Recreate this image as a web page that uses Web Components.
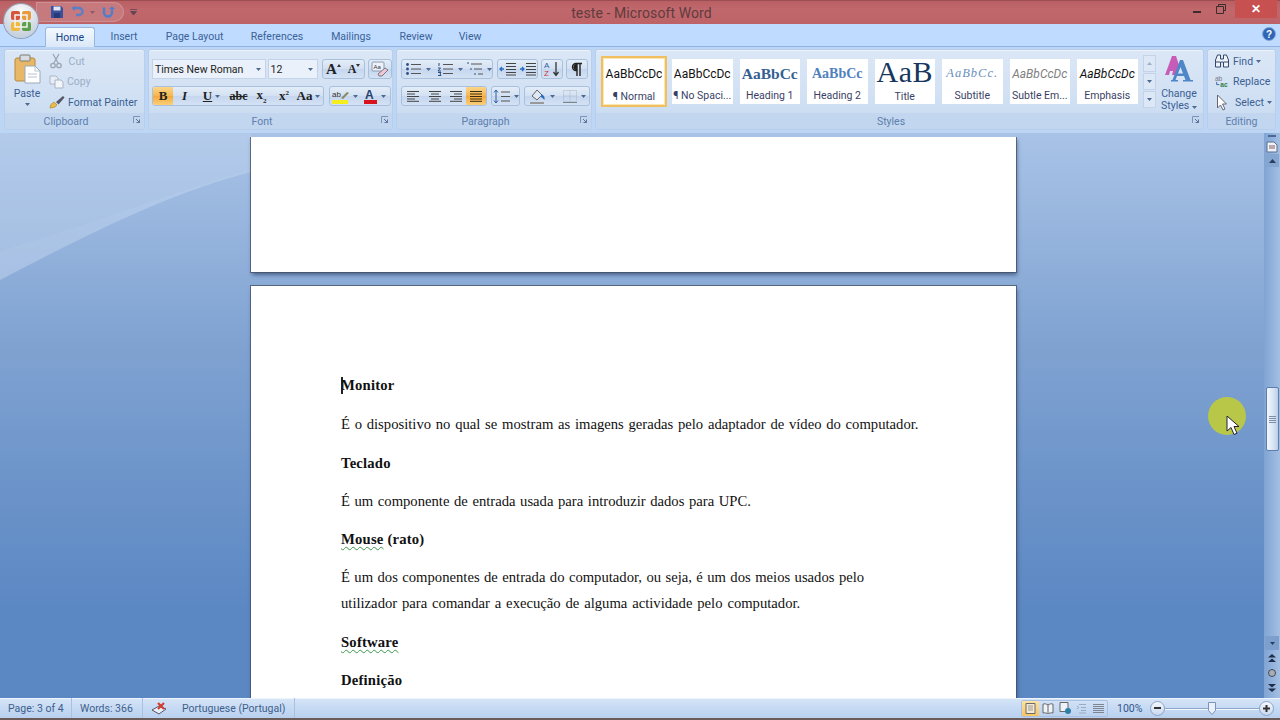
<!DOCTYPE html>
<html lang="en">
<head>
<meta charset="UTF-8">
<title>teste - Microsoft Word</title>
<style>
  html, body { margin: 0; padding: 0; height: 100%; overflow: hidden; background: #5c88c4; }
  body { font: 10.500px Roboto, sans-serif; }
</style>
</head>
<body>
<script>
  // shared icons, keyed by name
  const ICONS = {
    bullets: `<svg width="18" height="14" viewBox="0 0 18 14"><g fill="#2b4f86"><circle cx="2.500" cy="2.500" r="1.400"/><circle cx="2.500" cy="7" r="1.400"/><circle cx="2.500" cy="11.500" r="1.400"/></g><path d="M6 2.500h10M6 7h10M6 11.500h10" stroke="#555" fill="none"/></svg>`,
    numbers: `<svg width="18" height="14" viewBox="0 0 18 14"><path d="M2 1v3M1 6h2.500L1 9h3M1 10.500h3l-1 1.500 1 1.500H1" stroke="#2b4f86" fill="none"/><path d="M6 2.500h10M6 7h10M6 11.500h10" stroke="#555" fill="none"/></svg>`,
    multi: `<svg width="18" height="14" viewBox="0 0 18 14"><path d="M1 1h2M4 7h2M8 12h2" stroke="#2b4f86" fill="none"/><path d="M5 2h11M8 7h8M12 12h5" stroke="#555" fill="none"/></svg>`,
    outdent: `<svg width="18" height="14" viewBox="0 0 18 14"><path d="M7 1.500h10M7 4.500h10M7 7.500h10M7 10.500h10M7 13h10" stroke="#444" fill="none"/><path d="M5 7H1M3 5 1 7l2 2" stroke="#2b6cc4" stroke-width="1.300" fill="none"/></svg>`,
    indent: `<svg width="18" height="14" viewBox="0 0 18 14"><path d="M7 1.500h10M7 4.500h10M7 7.500h10M7 10.500h10M7 13h10" stroke="#444" fill="none"/><path d="M1 7h4M3 5l2 2-2 2" stroke="#2b6cc4" stroke-width="1.300" fill="none"/></svg>`,
    sort: `<svg width="18" height="16" viewBox="0 0 18 16"><text x="1" y="7" font-size="8" font-family="Liberation Sans" fill="#2b5fa8">A</text><text x="1" y="15" font-size="8" font-family="Liberation Sans" fill="#c33">Z</text><path d="M13 1v13M10.500 11l2.500 3.500 2.500-3.500" stroke="#333" stroke-width="1.300" fill="none"/></svg>`,
    left: `<svg width="14" height="12" viewBox="0 0 14 12"><path d="M1 1.500h12M1 4h8M1 6.500h12M1 9h8M1 11.300h12" stroke="#444" fill="none"/></svg>`,
    center: `<svg width="14" height="12" viewBox="0 0 14 12"><path d="M1 1.500h12M3 4h8M1 6.500h12M3 9h8M1 11.300h12" stroke="#444" fill="none"/></svg>`,
    right: `<svg width="14" height="12" viewBox="0 0 14 12"><path d="M1 1.500h12M5 4h8M1 6.500h12M5 9h8M1 11.300h12" stroke="#444" fill="none"/></svg>`,
    justify: `<svg width="14" height="12" viewBox="0 0 14 12"><path d="M1 1.500h12M1 4h12M1 6.500h12M1 9h12M1 11.300h12" stroke="#3a2c10" fill="none"/></svg>`,
    spacing: `<svg width="18" height="15" viewBox="0 0 18 15"><path d="M3 1v13M1 3.500 3 1l2 2.500M1 11.500 3 14l2-2.500" stroke="#2b5fa8" fill="none"/><path d="M8 3h9M8 7.500h9M8 12h9" stroke="#555" fill="none"/></svg>`,
    shade: `<svg width="18" height="17" viewBox="0 0 18 17"><path d="M3 8l5-6 5 5-5 5z" fill="#dfe7f2" stroke="#666"/><path d="M12 6c3 1 4 3 3.500 6-1-1-2-2-3.500-3z" fill="#2b6cc4"/><path d="M1 15h14" stroke="#999" stroke-width="2"/></svg>`,
    border: `<svg width="16" height="15" viewBox="0 0 16 15"><path d="M1.500 1.500h13v11h-13zM8 1.500v11M1.500 7h13" stroke="#a9b7c8" stroke-dasharray="1 1" fill="none"/><path d="M1 13.500h14" stroke="#788"/></svg>`,
    pilcrow: `<svg width="12" height="15" viewBox="0 0 12 15"><path d="M6 14V2M9 14V2M11 1.500H5a3.500 3.500 0 0 0 0 7h1" stroke="#222" stroke-width="1.400" fill="none"/><path d="M5 2a3.200 3.200 0 0 0 0 6.300h1V2z" fill="#222"/></svg>`,
    eraser: `<svg width="20" height="17" viewBox="0 0 20 17"><rect x="2" y="1" width="12" height="9" rx="1" fill="#eef2f8" stroke="#8a9ab0"/><text x="3.500" y="8" font-size="6" font-family="Liberation Sans" fill="#334">Aa</text><path d="M8 13l7-6 3 2-6 6H9z" fill="#f2c6d4" stroke="#778"/></svg>`,
    scissors: `<svg width="14" height="16" viewBox="0 0 14 16"><path d="M4 1l5 9M10 1 5 10" stroke="#9aa5b2" stroke-width="1.300" fill="none"/><circle cx="4" cy="12.500" r="2.200" fill="none" stroke="#9aa5b2" stroke-width="1.300"/><circle cx="10" cy="12.500" r="2.200" fill="none" stroke="#9aa5b2" stroke-width="1.300"/></svg>`,
    copy: `<svg width="15" height="14" viewBox="0 0 15 14"><path d="M1 1h6l2 2v6H1z" fill="#e8eef6" stroke="#a9b5c4"/><path d="M6 5h6l2 2v6H6z" fill="#f2f5fa" stroke="#a9b5c4"/></svg>`,
    brush: `<svg width="16" height="14" viewBox="0 0 16 14"><path d="M1 13c0-3 2-5 4-6l3 3c-1 2-4 3-7 3z" fill="#e9b94a" stroke="#a67b1f" stroke-width=".6"/><path d="M7 7l7-6 1.500 1.500-6 7z" fill="#556"/></svg>`,
    paste: `<svg width="27" height="30" viewBox="0 0 27 30"><rect x="1" y="4" width="20" height="23" rx="2" fill="#e8b868" stroke="#b98a3c"/><rect x="6" y="1" width="10" height="6" rx="1" fill="#d8dde3" stroke="#7c7c6c"/><path d="M11 12h10l5 5v12H11z" fill="#fff" stroke="#9aa8b8"/><path d="M21 12v5h5M14 20h9M14 23h9" stroke="#b6c2d0" fill="none"/></svg>`,
    binoculars: `<svg width="15" height="14" viewBox="0 0 15 14"><path d="M3 1h3v4h3V1h3l2 5v7H9V8H6v5H1V6z" fill="#eef3fa" stroke="#33466a"/><path d="M1.500 8h4M9.500 8h4" stroke="#33466a"/></svg>`,
    replace: `<svg width="18" height="15" viewBox="0 0 18 15"><text x="1" y="6.500" font-size="7.500" font-family="Liberation Sans" fill="#778">ab</text><text x="7" y="14" font-size="7.500" font-family="Liberation Sans" font-weight="700" fill="#2f7f3f">ac</text><path d="M3 8v3h3" stroke="#2b5fa8" fill="none"/></svg>`,
    select: `<svg width="13" height="17" viewBox="0 0 13 17"><path d="M2 1v13l3-3 2.500 5 2-1-2.500-5h4z" fill="#fff" stroke="#667"/></svg>`,
    change: `<svg width="30" height="27" viewBox="0 0 30 27"><path d="M1 20 8 1h4l4 12-5 7H8l1-4H6l-1 4z" fill="#c65cb8"/><path d="M7 25h1.500L16 5h3l7.500 20H29v1.500H19V25h2.500l-1.500-4h-7l-1.500 4H14v1.500H7zM14 18.500h5L16.500 12z" fill="#4f86c8" fill-rule="evenodd"/></svg>`,
    launcher: `<svg width="8" height="8" viewBox="0 0 8 8"><path d="M.5 7V.5H7" stroke="#7d94b5" fill="none"/><path d="M3 3l3.500 3.500M3.500 6.500h3v-3" stroke="#5c7396" fill="none"/></svg>`
  };
  const caret = (c = "#4d6a94") => `<svg width="5" height="3" viewBox="0 0 5 3" style="flex:none"><path d="M0 0h5L2.500 3z" fill="${c}"/></svg>`;
  const caretUp = (c) => `<svg width="7" height="4" viewBox="0 0 7 4" style="flex:none"><path d="M0 4h7L3.500 0z" fill="${c}"/></svg>`;

  class WdTitleBar extends HTMLElement {
    constructor() {
      super().attachShadow({ mode: "open" });
      this.shadowRoot.innerHTML = `<style>
        :host { display: flex; height: 24px; background: linear-gradient(#b95f64, #c0686c 40%, #bd6367); position: relative; align-items: center; box-shadow: inset 0 1px #9c4f53; }
        .qat { display: flex; align-items: center; height: 20px; margin-left: 36px; width: 88px; background: #c67a7e; border-radius: 0 11px 11px 0; box-shadow: inset 0 0 0 1px #cf8f92; padding-left: 14px; gap: 6px; box-sizing: border-box; flex: none; }
        .title { position: absolute; left: 0; right: 0; top: 5px; text-align: center; padding-left: 3px; font: 14px Roboto, sans-serif; letter-spacing: .1px; color: #5f3b3e; }
        .win { margin-left: auto; display: flex; align-items: stretch; height: 18px; align-self: flex-start; z-index: 1; margin-right: 3px; }
        .b { width: 24px; display: flex; align-items: center; justify-content: center; }
        .x { width: 42px; background: #c75050; color: #fff; font: 700 12px "Liberation Sans", sans-serif; height: 18px; margin-left: 2px; }
      </style>
      <div class="qat">
        <svg width="14" height="14" viewBox="0 0 14 14"><path d="M1 1h10l2 2v10H1z" fill="#3a4f9a"/><rect x="3.500" y="1.500" width="7" height="4" fill="#dfe6f2"/><rect x="4" y="8" width="6" height="5" fill="#263a7a"/></svg>
        <svg width="14" height="12" viewBox="0 0 14 12"><path d="M4 2h5a3.500 3.500 0 0 1 0 7H6" fill="none" stroke="#5a7ec8" stroke-width="2.400"/><path d="M1 2l4-2v5z" fill="#5a7ec8"/></svg>
        ${caret("#8a5a6a")}
        <svg width="14" height="13" viewBox="0 0 14 13"><path d="M3 1.500v5a4 4 0 0 0 8 0V3" fill="none" stroke="#4f7ecf" stroke-width="2.400"/><path d="M8 3h6L11 .2z" fill="#4f7ecf"/></svg>
      </div>
      <svg width="7" height="6" viewBox="0 0 7 6" style="margin-left:6px"><path d="M0 .5h7M.5 2.500h6L3.500 6z" stroke="#5f4455" fill="#5f4455" stroke-width=".8"/></svg>
      <div class="title">teste - Microsoft Word</div>
      <div class="win">
        <div class="b"><svg width="8" height="2" viewBox="0 0 8 2" style="margin-top:5px"><rect width="8" height="2" fill="#3c2c2e"/></svg></div>
        <div class="b"><svg width="10" height="10" viewBox="0 0 10 10"><path d="M2.500 2.500V.5h7v6h-2M.5 2.500h7v7h-7z" fill="none" stroke="#3c2c2e"/></svg></div>
        <div class="b x">✕</div>
      </div>`;
    }
  }
  customElements.define("wd-title-bar", WdTitleBar);

  class WdOrb extends HTMLElement {
    constructor() {
      super().attachShadow({ mode: "open" });
      this.shadowRoot.innerHTML = `<style>
        :host { display: block; position: absolute; left: 4px; top: 4px; width: 34px; height: 34px; border-radius: 50%; background: radial-gradient(circle at 50% 25%, #fdfdfd, #d5dce6 55%, #b8c6d8); box-shadow: 0 0 0 1px #8f9fb5; z-index: 3; }
        svg { position: absolute; left: 6px; top: 6px; }
      </style>
      <svg width="22" height="22" viewBox="0 0 22 22">
        <rect x="1" y="1" width="9" height="9" rx="2" fill="#d4553a"/><rect x="12" y="1" width="9" height="9" rx="2" fill="#e89b3a"/>
        <rect x="1" y="12" width="9" height="9" rx="2" fill="#efb93c"/><rect x="12" y="12" width="9" height="9" rx="2" fill="#5ea04a"/>
        <path d="M5 5h12v12H5z" fill="none" stroke="#f4f4f4" stroke-width="1.500"/>
      </svg>`;
    }
  }
  customElements.define("wd-orb", WdOrb);

  class WdTabs extends HTMLElement {
    constructor() {
      super().attachShadow({ mode: "open" });
      const tabs = [["Insert", 58], ["Page Layout", 83], ["References", 82], ["Mailings", 66], ["Review", 64], ["View", 44]];
      this.shadowRoot.innerHTML = `<style>
        :host { display: flex; height: 23px; background: #bfdbff; padding-left: 45px; position: relative; font: 10.500px Roboto, sans-serif; color: #3a6298; box-shadow: inset 0 -1px #8db2e3; }
        div { display: flex; align-items: center; justify-content: center; height: 23px; padding-top: 1px; box-sizing: border-box; }
        .on { width: 50px; margin-top: 3px; height: 20px; padding: 0 0 1px; background: linear-gradient(#f3f8fe, #dbe8f8); border: 1px solid #98b7de; border-bottom: 0; border-radius: 3px 3px 0 0; color: #15428b; }
        svg { position: absolute; right: 4px; top: 3px; }
      </style>
      <div class="on">Home</div>
      ${tabs.map(([t, w]) => `<div style="width:${w}px">${t}</div>`).join("")}
      <svg width="14" height="14" viewBox="0 0 14 14"><circle cx="7" cy="7" r="6.500" fill="#2f65b5" stroke="#86a9d8"/><text x="7" y="10.500" text-anchor="middle" font-size="10" font-weight="700" font-family="Liberation Sans" fill="#fff">?</text></svg>`;
    }
  }
  customElements.define("wd-tabs", WdTabs);

  class WdGroup extends HTMLElement {
    constructor() {
      super().attachShadow({ mode: "open" });
      const noLaunch = this.hasAttribute("nolaunch");
      this.shadowRoot.innerHTML = `<style>
        :host { display: flex; flex-direction: column; flex: none; box-sizing: border-box; height: 81px; border: 1px solid #b7cfec; border-radius: 3px; background: linear-gradient(#dbe7f6, #cfdff3 70%, #c5d8f0); box-shadow: 0 1px #eaf2fb inset; }
        .body { flex: 1; min-height: 0; position: relative; }
        .label { height: 16px; padding: 0 ${noLaunch ? 0 : 17}px 0 0; box-sizing: border-box; display: flex; align-items: center; justify-content: center; background: #c2d6ef; color: #5d80ae; font: 10.500px Roboto, sans-serif; position: relative; border-radius: 0 0 3px 3px; }
        .launch { position: absolute; right: 3px; top: 3px; line-height: 0; }
      </style>
      <div class="body"><slot></slot></div>
      <div class="label">${this.getAttribute("label")}${noLaunch ? "" : `<span class="launch">${ICONS.launcher}</span>`}</div>`;
    }
  }
  customElements.define("wd-group", WdGroup);

  // row of joined tool buttons, each passed in as a span with its own width
  class WdTools extends HTMLElement {
    constructor() {
      super().attachShadow({ mode: "open" });
      this.shadowRoot.innerHTML = `<style>
        :host { display: flex; box-sizing: border-box; flex: none; height: 20px; border: 1px solid #a9c0dd; border-radius: 3px; background: linear-gradient(#e4edf8, #d2e0f2 50%, #c5d6ee 52%, #d4e2f4); overflow: hidden; color: #333; font-family: "Liberation Serif", serif; }
        ::slotted(span) { display: flex; align-items: center; justify-content: center; height: 18px; gap: 3px; flex: none; }
        ::slotted(span.hot) { background: linear-gradient(#fbd689, #f6b550 50%, #f5a93d 52%, #fbcf7a); }
      </style><slot></slot>`;
    }
  }
  customElements.define("wd-tools", WdTools);

  class WdStyleTile extends HTMLElement {
    constructor() {
      super().attachShadow({ mode: "open" });
      const sel = this.hasAttribute("selected");
      this.shadowRoot.innerHTML = `<style>
        :host { display: flex; flex-direction: column; flex: none; box-sizing: border-box; width: ${sel ? 66 : 60.5}px; height: ${sel ? 51 : 45}px; background: #fff; ${sel ? "border: 2px solid #f0c060; box-shadow: inset 0 0 0 1px #fbe7b4; margin-right: -2px;" : ""} }
        .s { height: ${sel ? 31 : 30}px; display: flex; align-items: center; justify-content: center; white-space: nowrap; box-sizing: border-box; ${this.getAttribute("sample-style") || ""} }
        .n { text-align: center; font: 10.500px/16px Roboto, sans-serif; color: #3b3f66; white-space: nowrap; }
      </style>
      <div class="s">${this.getAttribute("sample")}</div>
      <div class="n">${this.getAttribute("name")}</div>`;
    }
  }
  customElements.define("wd-style-tile", WdStyleTile);

  class WdRibbon extends HTMLElement {
    constructor() {
      super().attachShadow({ mode: "open" });
      const tool = (w, inner, hot) => `<span style="width:${w}px" class="${hot ? "hot" : ""}">${inner}</span>`;
      const caretBtn = caret();
      this.shadowRoot.innerHTML = `<style>
        :host { display: flex; height: 86px; gap: 3px; padding: 2px 3px 0 4px; box-sizing: border-box; background: #bdd6f5; font: 10.500px Roboto, sans-serif; color: #3a5f93; }
        .clip { display: flex; height: 100%; }
        .paste { width: 44px; display: flex; flex-direction: column; align-items: center; padding-top: 4px; box-sizing: border-box; color: #3a5f93; gap: 4px; }
        .paste span { line-height: 11px; }
        .small { display: flex; flex-direction: column; padding-top: 1px; gap: 0; }
        .small div { display: flex; align-items: center; height: 20.500px; gap: 3px; white-space: nowrap; }
        .off { color: #9caec6; }
        .rows { display: flex; flex-direction: column; gap: 7px; padding: 9px 0 0 3px; }
        .row { display: flex; gap: 3px; }
        .combo { height: 20px; box-sizing: border-box; background: #eaf1fa; border: 1px solid #c3d4ea; display: flex; align-items: center; justify-content: space-between; padding: 0 4px 0 2px; color: #222; font: 10.500px Roboto, sans-serif; }
        .gallery { display: flex; align-items: flex-start; height: 100%; padding: 9px 0 0 5px; box-sizing: border-box; }
        .tiles { display: flex; gap: 7px; align-items: center; height: 45px; width: 541px; flex: none; }
        .scroll { display: flex; flex-direction: column; gap: 1px; margin-top: -4px; margin-left: 1px; }
        .scroll div { width: 13px; height: 17px; background: #dce8f6; border: 1px solid #c3d4ea; box-sizing: border-box; display: flex; align-items: center; justify-content: center; }
        .chg { width: 46px; display: flex; flex-direction: column; align-items: center; margin: -4px 0 0 0; line-height: 12px; text-align: center; }
        .edit { display: flex; flex-direction: column; padding: 1px 0 0 6px; }
        .edit div { display: flex; align-items: center; height: 20.500px; gap: 3px; }
        .edit svg:first-child { width: 16px; }
        .t { font-family: "Liberation Serif", serif; color: #222; }
      </style>
      <wd-group label="Clipboard" style="width:141px"><div class="clip">
        <div class="paste">${ICONS.paste}<span>Paste</span>${caret()}</div>
        <div class="small">
          <div class="off">${ICONS.scissors}&nbsp;Cut</div>
          <div class="off">${ICONS.copy}Copy</div>
          <div>${ICONS.brush}Format Painter</div>
        </div></div></wd-group>
      <wd-group label="Font" style="width:245px"><div class="rows">
        <div class="row" style="gap:2px">
          <div class="combo" style="width:115px">Times New Roman${caretBtn}</div>
          <div class="combo" style="width:51px">12${caretBtn}</div>
          <wd-tools style="margin-left:2px">
            ${tool(21, `<b style="font-size:15px" class="t">A</b><svg width="4" height="3" viewBox="0 0 4 3" style="margin:-8px 0 0 -3px"><path d="M0 3h4L2 0z" fill="#333"/></svg>`)}${tool(20, `<b style="font-size:12px" class="t">A</b><svg width="4" height="3" viewBox="0 0 4 3" style="margin:-8px 0 0 -3px"><path d="M0 0h4L2 3z" fill="#333"/></svg>`)}
          </wd-tools>
          <wd-tools style="margin-left:1px">${tool(22, ICONS.eraser)}</wd-tools>
        </div>
        <div class="row" style="gap:4px">
          <wd-tools style="width:172px">
            ${tool(20, `<b class="t" style="font-size:13px">B</b>`, 1)}${tool(23, `<i class="t" style="font-size:13px;font-weight:700">I</i>`)}${tool(31, `<b class="t" style="font-size:13px;text-decoration:underline">U</b>${caretBtn}`)}${tool(23, `<b class="t" style="font-size:12px;text-decoration:line-through">abc</b>`)}${tool(23, `<b class="t" style="font-size:13px">x<sub style="font-size:7px">2</sub></b>`)}${tool(22, `<b class="t" style="font-size:13px">x<sup style="font-size:7px">2</sup></b>`)}${tool(27, `<b class="t" style="font-size:13px">Aa</b>${caretBtn}`)}
          </wd-tools>
          <wd-tools style="width:62px;margin-left:1px">
            ${tool(30, `<svg width="18" height="15" viewBox="0 0 18 15"><rect y="11" width="16" height="4" fill="#f4ee1c"/><text x="0" y="8" font-size="8" font-family="Liberation Sans" fill="#333">ab</text><path d="M9 9l6-6 2 1-6 6z" fill="#8a8a60"/></svg>${caretBtn}`)}${tool(30, `<svg width="14" height="15" viewBox="0 0 14 15"><text x="1" y="10" font-size="12" font-family="Liberation Sans" font-weight="700" fill="#27406e">A</text><rect y="11" width="13" height="4" fill="#d8131c"/></svg>${caretBtn}`)}
          </wd-tools>
        </div>
      </div></wd-group>
      <wd-group label="Paragraph" style="width:196px"><div class="rows" style="padding-left:4px">
        <div class="row" style="gap:3px">
          <wd-tools>${tool(31, ICONS.bullets + caretBtn)}${tool(33, ICONS.numbers + caretBtn)}${tool(26, ICONS.multi + caretBtn)}</wd-tools>
          <wd-tools style="margin-left:1px">${tool(20, ICONS.outdent)}${tool(19, ICONS.indent)}</wd-tools>
          <wd-tools>${tool(20, ICONS.sort)}</wd-tools>
          <wd-tools>${tool(20, ICONS.pilcrow)}</wd-tools>
        </div>
        <div class="row" style="gap:4px">
          <wd-tools>${tool(22, ICONS.left)}${tool(22, ICONS.center)}${tool(20, ICONS.right)}${tool(20, ICONS.justify, 1)}</wd-tools>
          <wd-tools>${tool(27, ICONS.spacing + caretBtn)}</wd-tools>
          <wd-tools>${tool(33, ICONS.shade + caretBtn)}${tool(31, ICONS.border + caretBtn)}</wd-tools>
        </div>
      </div></wd-group>
      <wd-group label="Styles" style="width:609px"><div class="gallery">
        <div class="tiles">
          <wd-style-tile selected sample="AaBbCcDc" name="¶ Normal" sample-style='font:12px Roboto,sans-serif;color:#111'></wd-style-tile>
          <wd-style-tile sample="AaBbCcDc" name="¶ No Spaci..." sample-style='font:12px Roboto,sans-serif;color:#111'></wd-style-tile>
          <wd-style-tile sample="AaBbCc" name="Heading 1" sample-style='font:700 15.500px "Liberation Serif",serif;color:#365f91'></wd-style-tile>
          <wd-style-tile sample="AaBbCc" name="Heading 2" sample-style='font:700 14px "Liberation Serif",serif;color:#4f81bd'></wd-style-tile>
          <wd-style-tile sample="AaB" name="Title" sample-style='font:30px "Liberation Serif",serif;color:#17365d;letter-spacing:.5px;padding-bottom:4px'></wd-style-tile>
          <wd-style-tile sample="AaBbCc." name="Subtitle" sample-style='font:italic 12.500px "Liberation Serif",serif;color:#6a8fc0;letter-spacing:1px'></wd-style-tile>
          <wd-style-tile sample="AaBbCcDc" name="Subtle Em..." sample-style='font:italic 12px Roboto,sans-serif;color:#808080'></wd-style-tile>
          <wd-style-tile sample="AaBbCcDc" name="Emphasis" sample-style='font:italic 12px Roboto,sans-serif;color:#111'></wd-style-tile>
        </div>
        <div class="scroll">
          <div>${caret("#9eb0c8").replace("M0 0h5L2.500 3z", "M0 3h5L2.500 0z")}</div>
          <div>${caret()}</div>
          <div>${caret()}</div>
        </div>
        <div class="chg">${ICONS.change}<span style="margin-top:6px">Change<br>Styles ${caret()}</span></div>
      </div></wd-group>
      <wd-group label="Editing" nolaunch style="width:69px"><div class="edit">
        <div>${ICONS.binoculars}Find ${caret()}</div>
        <div>${ICONS.replace}Replace</div>
        <div>${ICONS.select}<span style="margin-left:2px">Select</span> ${caret()}</div>
      </div></wd-group>`;
    }
  }
  customElements.define("wd-ribbon", WdRibbon);

  class WdPage extends HTMLElement {
    constructor() {
      super().attachShadow({ mode: "open" });
      this.shadowRoot.innerHTML = `<style>
        :host { display: block; box-sizing: border-box; width: 765px; background: #fff; box-shadow: 0 0 0 1px rgba(70,80,100,.75), 1px 3px 4px rgba(30,50,90,.6); color: #111; font: 14.670px/16px "Liberation Serif", serif; flex: none; }
      </style><slot></slot>`;
    }
  }
  customElements.define("wd-page", WdPage);

  class WdPara extends HTMLElement {
    constructor() {
      super().attachShadow({ mode: "open" });
      this.shadowRoot.innerHTML = `<style>
        :host { display: block; white-space: nowrap; margin-bottom: var(--after, 22.300px); }
        :host([bold]) { font-weight: 700; letter-spacing: .2px; }
      </style><slot></slot>`;
    }
  }
  customElements.define("wd-para", WdPara);

  class WdScrollbar extends HTMLElement {
    constructor() {
      super().attachShadow({ mode: "open" });
      this.shadowRoot.innerHTML = `<style>
        :host { display: flex; flex-direction: column; align-items: center; width: 16px; flex: none; background: linear-gradient(90deg, #80a4d4, #a3bfe3); position: relative; }
        .split { width: 8px; height: 2px; background: #4a6a96; margin-top: 2px; }
        .ruler { height: 13px; margin-top: 4px; line-height: 0; }
        .up { width: 14px; height: 13px; display: flex; align-items: center; justify-content: center; background: #86a6d2; }
        .track { flex: 1; width: 100%; position: relative; }
        .thumb { position: absolute; left: 2px; right: 1px; top: 220px; height: 64px; border: 1px solid #5d7fae; border-radius: 2px; box-sizing: border-box; background: linear-gradient(90deg, #f4f7fc, #d7e3f3 60%, #b9cde8); display: flex; align-items: center; justify-content: center; }
        .down { width: 14px; height: 14px; display: flex; align-items: center; justify-content: center; background: #7d9fcd; }
        .nav { height: 48px; display: flex; flex-direction: column; align-items: center; gap: 7px; width: 100%; padding: 4px 0 0; box-sizing: border-box; }
      </style>
      <div class="split"></div>
      <div class="ruler"><svg width="12" height="12" viewBox="0 0 12 12"><path d="M1 1h7l3 3v7H1z" fill="#eef3fa" stroke="#5d6f8c"/><path d="M3 5h6M3 7h6" stroke="#8a5f5f"/></svg></div>
      <div class="up">${caretUp("#2a3f60")}</div>
      <div class="track"><div class="thumb"><svg width="7" height="7" viewBox="0 0 7 7"><path d="M0 .5h7M0 2.500h7M0 4.500h7M0 6.500h7" stroke="#7e8fa6"/></svg></div></div>
      <div class="down">${caret("#2a3f60")}</div>
      <div class="nav">
        <svg width="8" height="8" viewBox="0 0 8 8"><path d="M0 3.500 4 0l4 3.500zM0 8l4-3.500L8 8z" fill="#1d2d48"/></svg>
        <svg width="8" height="8" viewBox="0 0 8 8"><circle cx="4" cy="4" r="3.500" fill="#a9adb5" stroke="#434a56"/></svg>
        <svg width="8" height="8" viewBox="0 0 8 8"><path d="M0 0l4 3.500L8 0zM0 4.500 4 8l4-3.500z" fill="#1d2d48"/></svg>
      </div>`;
    }
  }
  customElements.define("wd-scrollbar", WdScrollbar);

  class WdDocView extends HTMLElement {
    constructor() {
      super().attachShadow({ mode: "open" });
      this.shadowRoot.innerHTML = `<style>
        :host { display: flex; height: 565px; overflow: hidden; position: relative; background: linear-gradient(#a9c3e7, #7fa2d1 38%, #5b87c3 85%); }
        .bg { position: absolute; left: 0; top: 0; }
        .pages { flex: 1; display: flex; flex-direction: column; align-items: flex-start; padding: 4px 0 0 251px; gap: 14px; overflow: hidden; position: relative; }
        .mouse { position: absolute; left: 1208px; top: 264px; width: 38px; height: 38px; border-radius: 50%; background: #b9c749; }
        .arrow { position: absolute; left: 1226px; top: 282px; }
      </style>
      <svg class="bg" width="260" height="200" viewBox="0 0 260 200">
        <path d="M0 147C90 100 170 60 251 39V0H0z" fill="#c3d6f1" opacity=".4"/>
        <path d="M0 118C90 92 170 60 251 36L251 39C170 60 90 100 0 147z" fill="#cfdef4" opacity=".12"/>
      </svg>
      <div class="pages"><slot></slot></div>
      <wd-scrollbar></wd-scrollbar>
      <div class="mouse"></div>
      <svg class="arrow" width="14" height="21" viewBox="0 0 14 21"><path d="M1 1v15l4-3.500 3 7 3-1.300-3-6.700h5z" fill="#fff" stroke="#223" stroke-width="1"/></svg>`;
    }
  }
  customElements.define("wd-doc-view", WdDocView);

  class WdStatusBar extends HTMLElement {
    constructor() {
      super().attachShadow({ mode: "open" });
      this.shadowRoot.innerHTML = `<style>
        :host { display: flex; align-items: center; height: 20px; background: linear-gradient(#d7e5f7, #c6daf4 50%, #b9d0ee); box-shadow: inset 0 1px #eef4fc; font: 10.500px Roboto, sans-serif; color: #3f5f8a; position: relative; }
        .c { height: 100%; display: flex; align-items: center; border-right: 1px solid #a9c1e0; box-sizing: border-box; flex: none; }
        .views { margin-left: auto; display: flex; height: 17px; border: 1px solid #a9c1e0; border-radius: 2px; box-sizing: border-box; width: 87px; margin-right: 5px; }
        .views span { width: 17px; display: flex; align-items: center; justify-content: center; }
        .views .on { background: linear-gradient(#fbe2a6, #f7c564); }
        .pct { width: 33px; padding-left: 4px; color: #33558a; flex: none; }
        .zm { position: relative; display: flex; align-items: center; width: 124px; margin-right: 6px; flex: none; justify-content: space-between; }
        .zm::before { content: ""; position: absolute; left: 12px; right: 12px; top: 7px; height: 1px; background: #8ca7cc; box-shadow: 0 1px #f2f7fd; }
        .rnd { width: 15px; height: 15px; border-radius: 50%; border: 1px solid #8ba4c6; background: linear-gradient(#f6f9fd, #c8d8ee); box-sizing: border-box; position: relative; display: flex; align-items: center; justify-content: center; }
        .thumb { position: absolute; left: 58px; top: 1px; }
      </style>
      <div class="c" style="width:72px;padding-left:8px">Page: 3 of 4</div>
      <div class="c" style="width:71px;padding-left:8px">Words: 366</div>
      <div class="c" style="width:152px;padding-left:8px">
        <svg width="16" height="13" viewBox="0 0 16 13"><path d="M1 8l7-4 7 3-7 5z" fill="#e9eef6" stroke="#556"/><path d="M7 1l6 6M13 1 7 7" stroke="#d23a2a" stroke-width="2"/></svg>
        <span style="margin-left:15px;white-space:nowrap">Portuguese (Portugal)</span>
      </div>
      <div class="views">
        <span class="on"><svg width="11" height="11" viewBox="0 0 11 11"><path d="M1 .5h9v10H1z" fill="#f4ead0" stroke="#6a6a6a"/><path d="M3 3h5M3 5h5M3 7h5" stroke="#999"/></svg></span>
        <span><svg width="12" height="11" viewBox="0 0 12 11"><path d="M1 1c2-.5 3.500 0 5 1 1.500-1 3-1.500 5-1v9c-2-.5-3.500 0-5 1-1.500-1-3-1.500-5-1z" fill="#eef3fa" stroke="#666"/><path d="M6 2v8" stroke="#666"/></svg></span>
        <span><svg width="12" height="12" viewBox="0 0 12 12"><path d="M1 .5h8v9H1z" fill="#eef3fa" stroke="#666"/><circle cx="9" cy="9" r="3" fill="#2d7fa6"/></svg></span>
        <span><svg width="11" height="11" viewBox="0 0 11 11"><path d="M3 1.500h7M5 4.500h5M5 7.500h5M3 10h7M1 3l2 1.500L1 6" stroke="#9aabbf" fill="none"/></svg></span>
        <span><svg width="11" height="11" viewBox="0 0 11 11"><path d="M0 1.500h11M0 3.500h11M0 5.500h11M0 7.500h11M0 9.500h11" stroke="#7d8590"/></svg></span>
      </div>
      <div class="pct">100%</div>
      <div class="zm">
        <div class="rnd"><svg width="7" height="2" viewBox="0 0 7 2"><rect width="7" height="2" fill="#333"/></svg></div>
        <svg class="thumb" width="8" height="13" viewBox="0 0 8 13"><path d="M.5.5h7v8L4 12.500.5 8.500z" fill="#e9f0fa" stroke="#7a93b8"/></svg>
        <div class="rnd"><svg width="7" height="7" viewBox="0 0 7 7"><path d="M0 2.500h7v2H0zM2.500 0h2v7h-2z" fill="#333"/></svg></div>
      </div>`;
    }
  }
  customElements.define("wd-status-bar", WdStatusBar);

  class WdApp extends HTMLElement {
    constructor() {
      super().attachShadow({ mode: "open" });
      this.shadowRoot.innerHTML = `<style>
        :host { display: flex; flex-direction: column; width: 1280px; height: 720px; position: relative; overflow: hidden; background: #6b5b58; }
      </style>
      <wd-orb></wd-orb>
      <wd-title-bar></wd-title-bar>
      <wd-tabs></wd-tabs>
      <wd-ribbon></wd-ribbon>
      <slot></slot>
      <wd-status-bar></wd-status-bar>`;
    }
  }
  customElements.define("wd-app", WdApp);

  const squiggle = "text-decoration:underline wavy #3a9a4a 1px;text-underline-offset:2px";
  document.body.innerHTML = `
  <wd-app>
    <wd-doc-view>
      <wd-page style="height:135px;clip-path:inset(0 -8px -8px -8px)"></wd-page>
      <wd-page style="padding:91px 0 0 90px;height:600px">
        <wd-para bold><span style="display:inline-block;width:2px;height:17px;margin-right:-2px;background:#222;vertical-align:-4px"></span>Monitor</wd-para>
        <wd-para style="word-spacing:1.05px">É o dispositivo no qual se mostram as imagens geradas pelo adaptador de vídeo do computador.</wd-para>
        <wd-para bold>Teclado</wd-para>
        <wd-para style="word-spacing:.9px">É um componente de entrada usada para introduzir dados para UPC.</wd-para>
        <wd-para bold><span style="${squiggle}">Mouse</span> (rato)</wd-para>
        <wd-para style="--after:10px;word-spacing:.75px">É um dos componentes de entrada do computador, ou seja, é um dos meios usados pelo</wd-para>
        <wd-para style="word-spacing:1.2px">utilizador para comandar a execução de alguma actividade pelo computador.</wd-para>
        <wd-para bold><span style="${squiggle}">Software</span></wd-para>
        <wd-para bold>Definição</wd-para>
      </wd-page>
    </wd-doc-view>
  </wd-app>`;
</script>
</body>
</html>
